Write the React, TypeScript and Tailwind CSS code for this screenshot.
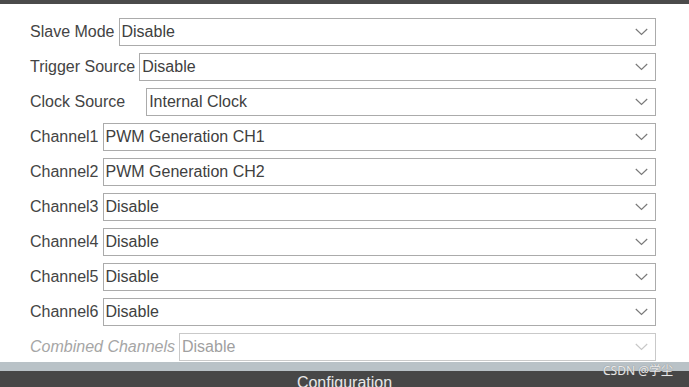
import React from 'react';

type Row = { label: string; value: string; gap?: string; disabled?: boolean };

const rows: Row[] = [
  { label: 'Slave Mode', value: 'Disable' },
  { label: 'Trigger Source', value: 'Disable' },
  { label: 'Clock Source', value: 'Internal Clock', gap: 'ml-[21px]' },
  { label: 'Channel1', value: 'PWM Generation CH1' },
  { label: 'Channel2', value: 'PWM Generation CH2' },
  { label: 'Channel3', value: 'Disable' },
  { label: 'Channel4', value: 'Disable' },
  { label: 'Channel5', value: 'Disable' },
  { label: 'Channel6', value: 'Disable' },
  { label: 'Combined Channels', value: 'Disable', disabled: true },
];

const Chevron = ({ light }: { light?: boolean }) => (
  <svg width="13" height="8" viewBox="0 0 13 8" className="shrink-0">
    <path
      d="M0.8 1 L6.5 6.5 L12.2 1"
      fill="none"
      stroke={light ? '#c8c8c8' : '#7a7a7a'}
      strokeWidth="1.2"
    />
  </svg>
);

const App = () => {
  return (
    <div className="w-[689px] h-[387px] bg-white flex flex-col overflow-hidden relative font-['Liberation_Sans',Arial,sans-serif]">
      <div className="h-[4px] bg-[#4b4b4b] shrink-0" />

      <div className="flex flex-col gap-[7px] pt-[14px] pl-[30px] pr-[33px]">
        {rows.map((r) => (
          <div key={r.label} className="flex items-center h-[28px]">
            <span
              className={
                r.disabled
                  ? 'text-[16px] italic text-[#a6a6a6] whitespace-nowrap'
                  : 'text-[16px] text-[#444444] whitespace-nowrap'
              }
            >
              {r.label}
            </span>
            <div
              className={`flex-1 h-[28px] flex items-center justify-between pl-[2px] pr-[7px] border ${
                r.disabled ? 'border-[#c9c9c9]' : 'border-[#ababab]'
              } ${r.gap ?? 'ml-[4px]'}`}
            >
              <span className={r.disabled ? 'text-[16px] text-[#a0a0a0]' : 'text-[16px] text-[#404040]'}>
                {r.value}
              </span>
              <Chevron light={r.disabled} />
            </div>
          </div>
        ))}
      </div>

      <div className="h-[1px] shrink-0" />
      <div className="h-[9px] bg-[#b9c2c7] shrink-0" />
      <div className="h-[16px] bg-[#474747] shrink-0 flex justify-center pt-[4px] overflow-hidden">
        <span className="text-[16px] text-[#e8e8e8] leading-none">Configuration</span>
      </div>

      <span className="absolute right-[16px] top-[362px] text-[12px] text-white/85 font-['Noto_Sans','Noto_Sans_CJK_SC',sans-serif] [text-shadow:0_0_1px_#666]">
        CSDN @学尘
      </span>
    </div>
  );
};

export default App;
